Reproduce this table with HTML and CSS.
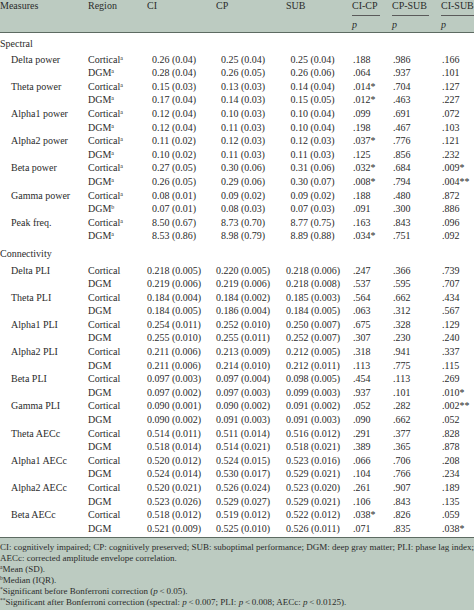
FILE: index.html
```html
<!DOCTYPE html>
<html>
<head>
<meta charset="utf-8">
<link rel="stylesheet" href="styles.css">
</head>
<body>
<div class="sheet">
<table class="grid">
<colgroup>
<col class="c-meas"><col class="c-reg"><col class="c-ci"><col class="c-cp"><col class="c-sub"><col class="c-p1"><col class="c-p2"><col class="c-p3">
</colgroup>
<thead>
<tr class="h1">
<th>Measures</th><th>Region</th><th>CI</th><th>CP</th><th>SUB</th>
<th><span class="ul">CI-CP</span></th><th><span class="ul">CP-SUB</span></th><th><span class="ul">CI-SUB</span></th>
</tr>
<tr class="h2">
<th></th><th></th><th></th><th></th><th></th><th><i>p</i></th><th><i>p</i></th><th><i>p</i></th>
</tr>
</thead>
<tbody>
<tr class="sec first"><td colspan="8">Spectral</td></tr>
<tr><td class="m">Delta power</td><td>Cortical<sup>a</sup></td><td class="v">0.26 (0.04)</td><td class="v">0.25 (0.04)</td><td class="v">0.25 (0.04)</td><td class="p">.188</td><td class="p">.986</td><td class="p">.166</td></tr>
<tr><td class="m"></td><td>DGM<sup>a</sup></td><td class="v">0.28 (0.04)</td><td class="v">0.26 (0.05)</td><td class="v">0.26 (0.06)</td><td class="p">.064</td><td class="p">.937</td><td class="p">.101</td></tr>
<tr><td class="m">Theta power</td><td>Cortical<sup>a</sup></td><td class="v">0.15 (0.03)</td><td class="v">0.13 (0.03)</td><td class="v">0.14 (0.04)</td><td class="p">.014*</td><td class="p">.704</td><td class="p">.127</td></tr>
<tr><td class="m"></td><td>DGM<sup>a</sup></td><td class="v">0.17 (0.04)</td><td class="v">0.14 (0.03)</td><td class="v">0.15 (0.05)</td><td class="p">.012*</td><td class="p">.463</td><td class="p">.227</td></tr>
<tr><td class="m">Alpha1 power</td><td>Cortical<sup>a</sup></td><td class="v">0.12 (0.04)</td><td class="v">0.10 (0.03)</td><td class="v">0.10 (0.04)</td><td class="p">.099</td><td class="p">.691</td><td class="p">.072</td></tr>
<tr><td class="m"></td><td>DGM<sup>a</sup></td><td class="v">0.12 (0.04)</td><td class="v">0.11 (0.03)</td><td class="v">0.10 (0.04)</td><td class="p">.198</td><td class="p">.467</td><td class="p">.103</td></tr>
<tr><td class="m">Alpha2 power</td><td>Cortical<sup>a</sup></td><td class="v">0.11 (0.02)</td><td class="v">0.12 (0.03)</td><td class="v">0.12 (0.03)</td><td class="p">.037*</td><td class="p">.776</td><td class="p">.121</td></tr>
<tr><td class="m"></td><td>DGM<sup>a</sup></td><td class="v">0.10 (0.02)</td><td class="v">0.11 (0.03)</td><td class="v">0.11 (0.03)</td><td class="p">.125</td><td class="p">.856</td><td class="p">.232</td></tr>
<tr><td class="m">Beta power</td><td>Cortical<sup>a</sup></td><td class="v">0.27 (0.05)</td><td class="v">0.30 (0.06)</td><td class="v">0.31 (0.06)</td><td class="p">.032*</td><td class="p">.684</td><td class="p">.009*</td></tr>
<tr><td class="m"></td><td>DGM<sup>a</sup></td><td class="v">0.26 (0.05)</td><td class="v">0.29 (0.06)</td><td class="v">0.30 (0.07)</td><td class="p">.008*</td><td class="p">.794</td><td class="p">.004**</td></tr>
<tr><td class="m">Gamma power</td><td>Cortical<sup>a</sup></td><td class="v">0.08 (0.01)</td><td class="v">0.09 (0.02)</td><td class="v">0.09 (0.02)</td><td class="p">.188</td><td class="p">.480</td><td class="p">.872</td></tr>
<tr><td class="m"></td><td>DGM<sup>b</sup></td><td class="v">0.07 (0.01)</td><td class="v">0.08 (0.03)</td><td class="v">0.07 (0.03)</td><td class="p">.091</td><td class="p">.300</td><td class="p">.886</td></tr>
<tr><td class="m">Peak freq.</td><td>Cortical<sup>a</sup></td><td class="v">8.50 (0.67)</td><td class="v">8.73 (0.70)</td><td class="v">8.77 (0.75)</td><td class="p">.163</td><td class="p">.843</td><td class="p">.096</td></tr>
<tr><td class="m"></td><td>DGM<sup>a</sup></td><td class="v">8.53 (0.86)</td><td class="v">8.98 (0.79)</td><td class="v">8.89 (0.88)</td><td class="p">.034*</td><td class="p">.751</td><td class="p">.092</td></tr>
<tr class="sec"><td colspan="8">Connectivity</td></tr>
<tr><td class="m">Delta PLI</td><td>Cortical</td><td class="v">0.218 (0.005)</td><td class="v">0.220 (0.005)</td><td class="v">0.218 (0.006)</td><td class="p">.247</td><td class="p">.366</td><td class="p">.739</td></tr>
<tr><td class="m"></td><td>DGM</td><td class="v">0.219 (0.006)</td><td class="v">0.219 (0.006)</td><td class="v">0.218 (0.008)</td><td class="p">.537</td><td class="p">.595</td><td class="p">.707</td></tr>
<tr><td class="m">Theta PLI</td><td>Cortical</td><td class="v">0.184 (0.004)</td><td class="v">0.184 (0.002)</td><td class="v">0.185 (0.003)</td><td class="p">.564</td><td class="p">.662</td><td class="p">.434</td></tr>
<tr><td class="m"></td><td>DGM</td><td class="v">0.184 (0.005)</td><td class="v">0.186 (0.004)</td><td class="v">0.184 (0.005)</td><td class="p">.063</td><td class="p">.312</td><td class="p">.567</td></tr>
<tr><td class="m">Alpha1 PLI</td><td>Cortical</td><td class="v">0.254 (0.011)</td><td class="v">0.252 (0.010)</td><td class="v">0.250 (0.007)</td><td class="p">.675</td><td class="p">.328</td><td class="p">.129</td></tr>
<tr><td class="m"></td><td>DGM</td><td class="v">0.255 (0.010)</td><td class="v">0.255 (0.011)</td><td class="v">0.252 (0.007)</td><td class="p">.307</td><td class="p">.230</td><td class="p">.240</td></tr>
<tr><td class="m">Alpha2 PLI</td><td>Cortical</td><td class="v">0.211 (0.006)</td><td class="v">0.213 (0.009)</td><td class="v">0.212 (0.005)</td><td class="p">.318</td><td class="p">.941</td><td class="p">.337</td></tr>
<tr><td class="m"></td><td>DGM</td><td class="v">0.211 (0.006)</td><td class="v">0.214 (0.010)</td><td class="v">0.212 (0.011)</td><td class="p">.113</td><td class="p">.775</td><td class="p">.115</td></tr>
<tr><td class="m">Beta PLI</td><td>Cortical</td><td class="v">0.097 (0.003)</td><td class="v">0.097 (0.004)</td><td class="v">0.098 (0.005)</td><td class="p">.454</td><td class="p">.113</td><td class="p">.269</td></tr>
<tr><td class="m"></td><td>DGM</td><td class="v">0.097 (0.002)</td><td class="v">0.097 (0.003)</td><td class="v">0.099 (0.003)</td><td class="p">.937</td><td class="p">.101</td><td class="p">.010*</td></tr>
<tr><td class="m">Gamma PLI</td><td>Cortical</td><td class="v">0.090 (0.001)</td><td class="v">0.090 (0.002)</td><td class="v">0.091 (0.002)</td><td class="p">.052</td><td class="p">.282</td><td class="p">.002**</td></tr>
<tr><td class="m"></td><td>DGM</td><td class="v">0.090 (0.002)</td><td class="v">0.091 (0.003)</td><td class="v">0.091 (0.003)</td><td class="p">.090</td><td class="p">.662</td><td class="p">.052</td></tr>
<tr><td class="m">Theta AECc</td><td>Cortical</td><td class="v">0.514 (0.011)</td><td class="v">0.511 (0.014)</td><td class="v">0.516 (0.012)</td><td class="p">.291</td><td class="p">.377</td><td class="p">.828</td></tr>
<tr><td class="m"></td><td>DGM</td><td class="v">0.518 (0.014)</td><td class="v">0.514 (0.021)</td><td class="v">0.518 (0.021)</td><td class="p">.389</td><td class="p">.365</td><td class="p">.878</td></tr>
<tr><td class="m">Alpha1 AECc</td><td>Cortical</td><td class="v">0.520 (0.012)</td><td class="v">0.524 (0.015)</td><td class="v">0.523 (0.016)</td><td class="p">.066</td><td class="p">.706</td><td class="p">.208</td></tr>
<tr><td class="m"></td><td>DGM</td><td class="v">0.524 (0.014)</td><td class="v">0.530 (0.017)</td><td class="v">0.529 (0.021)</td><td class="p">.104</td><td class="p">.766</td><td class="p">.234</td></tr>
<tr><td class="m">Alpha2 AECc</td><td>Cortical</td><td class="v">0.520 (0.021)</td><td class="v">0.526 (0.024)</td><td class="v">0.523 (0.020)</td><td class="p">.261</td><td class="p">.907</td><td class="p">.189</td></tr>
<tr><td class="m"></td><td>DGM</td><td class="v">0.523 (0.026)</td><td class="v">0.529 (0.027)</td><td class="v">0.529 (0.021)</td><td class="p">.106</td><td class="p">.843</td><td class="p">.135</td></tr>
<tr><td class="m">Beta AECc</td><td>Cortical</td><td class="v">0.518 (0.012)</td><td class="v">0.519 (0.012)</td><td class="v">0.522 (0.012)</td><td class="p">.038*</td><td class="p">.826</td><td class="p">.059</td></tr>
<tr class="last"><td class="m"></td><td>DGM</td><td class="v">0.521 (0.009)</td><td class="v">0.525 (0.010)</td><td class="v">0.526 (0.011)</td><td class="p">.071</td><td class="p">.835</td><td class="p">.038*</td></tr>
</tbody>
</table>
<div class="notes">
<p>CI: cognitively impaired; CP: cognitively preserved; SUB: suboptimal performance; DGM: deep gray matter; PLI: phase lag index; AECc: corrected amplitude envelope correlation.</p>
<p><sup>a</sup>Mean (SD).</p>
<p><sup>b</sup>Median (IQR).</p>
<p><sup>*</sup>Significant before Bonferroni correction (<i>p</i>&thinsp;&lt;&thinsp;0.05).</p>
<p><sup>**</sup>Significant after Bonferroni correction (spectral: <i>p</i>&thinsp;&lt;&thinsp;0.007; PLI: <i>p</i>&thinsp;&lt;&thinsp;0.008; AECc: <i>p</i>&thinsp;&lt;&thinsp;0.0125).</p>
</div>
</div>
</body>
</html>
```
FILE: styles.css
```css
html, body {
  margin: 0;
  padding: 0;
  background: #ffffff;
}
body {
  width: 474px;
  height: 610px;
  overflow: hidden;
  font-family: "Liberation Serif", "Times New Roman", serif;
  color: #2b2b2b;
}
.sheet {
  width: 520px;
}
.grid {
  border-collapse: collapse;
  table-layout: fixed;
  width: 520px;
  font-size: 10px;
}
.c-meas { width: 88px; }
.c-reg { width: 59px; }
.c-ci { width: 69px; }
.c-cp { width: 70px; }
.c-sub { width: 66px; }
.c-p1 { width: 40px; }
.c-p2 { width: 49px; }
.c-p3 { width: 79px; }

.grid th {
  font-weight: normal;
  text-align: left;
  padding: 0;
  white-space: nowrap;
}
.grid thead tr {
  background: #bccbc1;
}
.h1 th {
  height: 17px;
  line-height: 12px;
  vertical-align: top;
  padding-top: 0;
}
.h2 th {
  height: 15px;
  line-height: 14px;
  vertical-align: middle;
  border-bottom: 1.5px solid #5d6b62;
}
.ul {
  display: inline-block;
  padding-right: 2px;
  padding-bottom: 3px;
  border-bottom: 1px solid #5a5a5a;
}
.grid td {
  padding: 0;
  height: 13.6px;
  line-height: 13.6px;
  white-space: nowrap;
  vertical-align: middle;
}
.grid td.m {
  padding-left: 11px;
}
.grid td.v {
  text-align: center;
}
.grid td:nth-child(3) { padding-right: 15px; }
.grid td:nth-child(4) { padding-right: 16px; }
.grid td:nth-child(5) { padding-right: 13px; }
.grid td.p {
  padding-left: 1px;
}
.sec td {
  padding-top: 4px;
  padding-bottom: 3px;
}
.sec.first td {
  padding-top: 4px;
  padding-bottom: 2px;
}
.last td {
  padding-bottom: 2px;
}
sup {
  font-size: 6px;
  line-height: 0;
  vertical-align: 3px;
}
.notes {
  width: 474px;
  box-sizing: border-box;
  background: #bccbc1;
  border-top: 1.5px solid #5d6b62;
  padding: 4px 0 4px 0;
  font-size: 9px;
  line-height: 11px;
  height: 80px;
}
.notes p {
  margin: 0;
}
.notes sup {
  font-size: 5.5px;
  vertical-align: 3px;
}
```
